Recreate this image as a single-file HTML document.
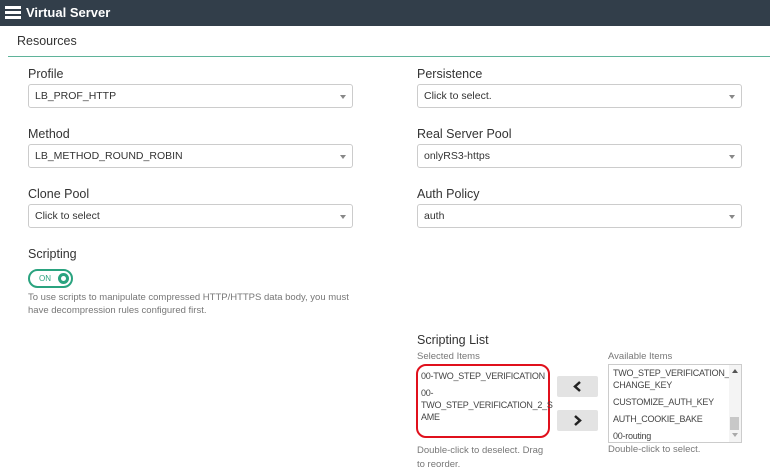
<!DOCTYPE html>
<html><head><style>
body{margin:0;width:770px;height:471px;background:#fff;font-family:"Liberation Sans",sans-serif;position:relative;overflow:hidden;color:#333}
.hdr{position:absolute;left:0;top:0;width:770px;height:26px;background:#323e4a;color:#fff;font-weight:bold;font-size:13px}
.abs{position:absolute}
.lbl{position:absolute;font-size:12.5px;color:#333}
.sel{position:absolute;width:325px;height:24px;border:1px solid #ccc;border-radius:3px;font-size:10.5px;color:#333;line-height:23px;box-sizing:border-box;padding-left:6px}
.sel:after{content:"";position:absolute;right:6px;top:10px;border-left:3px solid transparent;border-right:3px solid transparent;border-top:4px solid #888}
.small{position:absolute;font-size:9.5px;color:#777}
.it{font-size:9px;color:#444;line-height:12px;white-space:nowrap;letter-spacing:-0.25px}
.btn{position:absolute;width:41px;height:21px;background:#e3e3e3;border-radius:2px}
</style></head><body>
<div class="hdr">
<svg class="abs" style="left:5px;top:6px" width="16" height="13"><rect x="0" y="0" width="16" height="3" fill="#fff"/><rect x="0" y="5" width="16" height="3" fill="#fff"/><rect x="0" y="10" width="16" height="3" fill="#fff"/></svg>
<span class="abs" style="left:26px;top:5px">Virtual Server</span></div>
<div class="lbl" style="left:17px;top:34px">Resources</div>
<div class="abs" style="left:8px;top:56px;width:762px;height:1px;background:#5fb39a"></div>
<div class="lbl" style="left:28px;top:67px">Profile</div>
<div class="sel" style="left:28px;top:84px">LB_PROF_HTTP</div>
<div class="lbl" style="left:28px;top:127px">Method</div>
<div class="sel" style="left:28px;top:144px">LB_METHOD_ROUND_ROBIN</div>
<div class="lbl" style="left:28px;top:187px">Clone Pool</div>
<div class="sel" style="left:28px;top:204px">Click to select</div>
<div class="lbl" style="left:417px;top:67px">Persistence</div>
<div class="sel" style="left:417px;top:84px">Click to select.</div>
<div class="lbl" style="left:417px;top:127px">Real Server Pool</div>
<div class="sel" style="left:417px;top:144px">onlyRS3-https</div>
<div class="lbl" style="left:417px;top:187px">Auth Policy</div>
<div class="sel" style="left:417px;top:204px">auth</div>
<div class="lbl" style="left:28px;top:247px">Scripting</div>
<div class="abs" style="left:28px;top:269px;width:45px;height:19px;border:2px solid #2aa37f;border-radius:10px;box-sizing:border-box">
<span class="abs" style="left:9px;top:3px;font-size:8px;color:#2aa37f">ON</span>
<span class="abs" style="left:28px;top:2px;width:11px;height:11px;background:#2aa37f;border-radius:50%"></span>
<span class="abs" style="left:31px;top:5px;width:5px;height:5px;background:#fff;border-radius:50%"></span></div>
<div class="small" style="left:28px;top:291px;line-height:13px;width:340px">To use scripts to manipulate compressed HTTP/HTTPS data body, you must have decompression rules configured first.</div>
<div class="lbl" style="left:417px;top:333px">Scripting List</div>
<div class="small" style="left:417px;top:351px">Selected Items</div>
<div class="small" style="left:608px;top:351px">Available Items</div>
<div class="abs" style="left:416px;top:364px;width:134px;height:74px;border:2px solid #e0101c;border-radius:10px;box-sizing:border-box;padding:4px 3px" >
<div class="it" style="margin-bottom:5px">00-TWO_STEP_VERIFICATION</div>
<div class="it">00-<br>TWO_STEP_VERIFICATION_2_S<br>AME</div></div>
<div class="btn" style="left:557px;top:376px"><svg width="41" height="21"><path d="M23 6 L18 10.5 L23 15" stroke="#222" stroke-width="2.5" fill="none"/></svg></div>
<div class="btn" style="left:557px;top:410px"><svg width="41" height="21"><path d="M18 6 L23 10.5 L18 15" stroke="#222" stroke-width="2.5" fill="none"/></svg></div>
<div class="abs" style="left:608px;top:364px;width:134px;height:79px;border:1px solid #ccc;box-sizing:border-box;overflow:hidden;padding:2px 4px">
<div class="it">TWO_STEP_VERIFICATION_<br>CHANGE_KEY</div>
<div class="it" style="margin-top:5px">CUSTOMIZE_AUTH_KEY</div>
<div class="it" style="margin-top:5px">AUTH_COOKIE_BAKE</div>
<div class="it" style="margin-top:5px">00-routing</div>
<div class="abs" style="right:0;top:0;width:12px;height:77px;background:#f4f4f4"></div>
<div class="abs" style="right:2px;top:52px;width:9px;height:13px;background:#c8c8c8"></div>
<div class="abs" style="right:3px;top:4px;border-left:3px solid transparent;border-right:3px solid transparent;border-bottom:4px solid #555"></div>
<div class="abs" style="right:3px;top:68px;border-left:3px solid transparent;border-right:3px solid transparent;border-top:4px solid #aaa"></div>
</div>
<div class="small" style="left:417px;top:444px;line-height:14px;width:136px">Double-click to deselect. Drag to reorder.</div>
<div class="small" style="left:608px;top:444px">Double-click to select.</div>
</body></html>
